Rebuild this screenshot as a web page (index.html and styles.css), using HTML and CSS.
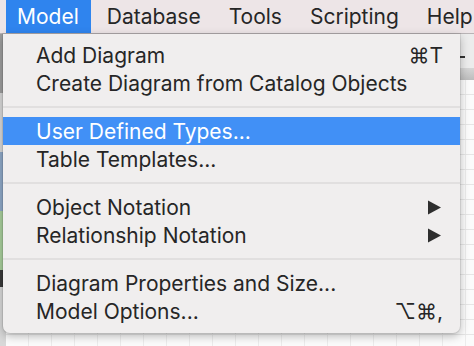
FILE: index.html
```html
<!DOCTYPE html>
<html lang="en">
<head>
    <meta charset="UTF-8">
    <title>Model Menu</title>
    <link rel="stylesheet" href="styles.css">
</head>
<body>
    <header class="menubar">
        <span class="menu-title active">Model</span>
        <span class="menu-title">Database</span>
        <span class="menu-title">Tools</span>
        <span class="menu-title">Scripting</span>
        <span class="menu-title">Help</span>
    </header>
    <main class="workspace">
        <div class="side-strip">
            <div class="strip gray"></div>
            <div class="strip light"></div>
            <div class="strip blue"></div>
            <div class="strip green"></div>
            <div class="strip dark"></div>
            <div class="strip light"></div>
        </div>
        <div class="canvas">
            <div class="toolbar"><span class="dash"></span></div>
            <div class="ruler"></div>
            <div class="grid"></div>
        </div>

        <div class="dropdown">
            <div class="item"><span>Add Diagram</span><span class="shortcut">⌘T</span></div>
            <div class="item"><span>Create Diagram from Catalog Objects</span></div>
            <div class="separator"></div>
            <div class="item selected"><span>User Defined Types...</span></div>
            <div class="item"><span>Table Templates...</span></div>
            <div class="separator"></div>
            <div class="item">
                <span>Object Notation</span>
                <svg class="arrow" width="15" height="15" viewBox="0 0 15 15"><path d="M1 0.5 L14 7.5 L1 14.5 Z"/></svg>
            </div>
            <div class="item">
                <span>Relationship Notation</span>
                <svg class="arrow" width="15" height="15" viewBox="0 0 15 15"><path d="M1 0.5 L14 7.5 L1 14.5 Z"/></svg>
            </div>
            <div class="separator"></div>
            <div class="item"><span>Diagram Properties and Size...</span></div>
            <div class="item"><span>Model Options...</span><span class="shortcut opt">⌥⌘,</span></div>
        </div>
    </main>
</body>
</html>
```

FILE: styles.css
```css
body {
    margin: 0;
    width: 474px;
    height: 346px;
    overflow: hidden;
    font-family: Inter, "Noto Sans", "Liberation Sans", sans-serif;
    color: #262626;
    background: #ffffff;
}
.menubar {
    display: flex;
    height: 33px;
    padding-left: 6px;
    background: #ede5e7;
    border-bottom: 1px solid #b9b4b6;
    font-size: 21px;
    line-height: 33px;
    white-space: nowrap;
}
.menu-title {
    padding: 0 12px 0 11px;
    margin-right: 5px;
}
.menu-title.active {
    background: #2f84ee;
    color: white;
}
.workspace {
    position: relative;
    display: flex;
    height: 312px;
}
.side-strip {
    width: 6px;
    display: flex;
    flex-direction: column;
}
.strip { flex: 1; }
.strip.gray { background: #9d9d9d; }
.strip.light { background: #d8d8d8; }
.strip.blue { background: #8fa9c8; }
.strip.green { background: #a9cf9c; }
.strip.dark { background: #3a3a3a; flex: 0.3; }
.canvas {
    flex: 1;
    display: flex;
    flex-direction: column;
}
.toolbar {
    height: 34px;
    background: #ececec;
    display: flex;
    justify-content: flex-end;
    align-items: center;
    padding-top: 12px;
    box-sizing: border-box;
}
.dash {
    width: 5px;
    height: 2px;
    background: #333;
    margin-right: 9px;
}
.ruler {
    height: 12px;
    background: linear-gradient(#d6d6d6, #bdbdbd);
}
.grid {
    flex: 1;
    background-color: #fbfbfb;
    background-image:
        repeating-linear-gradient(to bottom, transparent 0 14px, #e6e6e6 14px 15px),
        repeating-linear-gradient(to right, transparent 0 22px, #ececec 22px 23px);
}
.dropdown {
    position: absolute;
    top: 0;
    left: 3px;
    width: 457px;
    padding: 7px 0 8px;
    background: #f0eeee;
    border-radius: 0 0 7px 7px;
    box-shadow: 0 3px 10px rgba(0, 0, 0, 0.28), 0 0 0 1px rgba(0, 0, 0, 0.08);
    font-size: 21px;
}
.item {
    display: flex;
    justify-content: space-between;
    align-items: center;
    height: 28px;
    padding: 0 17px 0 33px;
}
.item.selected {
    background: #4190f6;
    color: white;
}
.arrow {
    fill: #2e2e2e;
    margin-right: 1px;
}
.separator {
    height: 2px;
    margin: 9px 0;
    background: #e1dfdf;
}
```
